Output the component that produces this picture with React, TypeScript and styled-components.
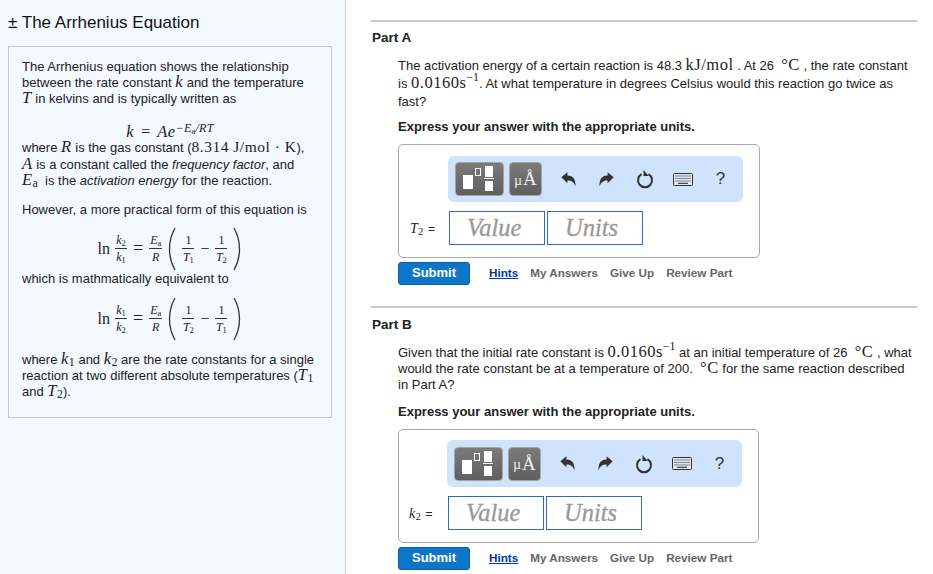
import React from "react";
import styled, { createGlobalStyle } from "styled-components";

const Global = createGlobalStyle`
  html, body { margin: 0; padding: 0; background: #fff; height: 100%; overflow: hidden; }
  body { font-family: "Liberation Sans", Arial, sans-serif; font-size: 13px; color: #222; }
`;

const Page = styled.div`
  display: flex;
  width: 933px;
  height: 574px;
  overflow: hidden;
`;

const Sidebar = styled.aside`
  flex: none;
  width: 346px;
  height: 574px;
  box-sizing: border-box;
  background: #f4f9ff;
  border-right: 1px solid #c9d6e2;
  padding-left: 8px;
`;

const SideTitle = styled.h1`
  margin: 0;
  padding-top: 13px;
  height: 46px;
  box-sizing: border-box;
  font-size: 17px;
  line-height: 20px;
  font-weight: 400;
  color: #111;
`;

const InfoBox = styled.div`
  width: 324px;
  box-sizing: border-box;
  border: 1px solid #b8cde0;
  padding: 12px 13px 17px;
`;

const M = styled.span<{ $size?: number }>`
  font-family: "Liberation Serif", "Times New Roman", serif;
  font-size: ${(p) => p.$size ?? 16.5}px;
  letter-spacing: 0.5px;
  line-height: 0;
`;

const Mi = styled(M)`
  font-style: italic;
`;

const Para = styled.p<{ $top?: number; $lh?: number }>`
  margin: ${(p) => p.$top ?? 0}px 0 0;
  line-height: ${(p) => p.$lh ?? 16}px;
  white-space: nowrap;
`;

const Formula = styled.div<{ $top: number; $h: number }>`
  display: flex;
  align-items: center;
  justify-content: center;
  height: ${(p) => p.$h}px;
  margin-top: ${(p) => p.$top}px;
  font-family: "Liberation Serif", "Times New Roman", serif;
  font-size: 16px;
  white-space: nowrap;
`;

const Power = styled.span`
  font-family: "Liberation Serif", "Times New Roman", serif;
  font-style: italic;
  font-size: 12px;
  letter-spacing: 0.3px;
  line-height: 12px;
  margin-bottom: 8px;
`;

const Sub = styled.sub`
  font-size: 0.72em;
  font-style: normal;
  letter-spacing: 0;
  line-height: 0;
  vertical-align: -0.2em;
`;

const Sup = styled.sup`
  font-size: 0.72em;
  letter-spacing: 0;
  line-height: 0;
  vertical-align: 0.55em;
`;

const Frac = styled.span`
  display: inline-flex;
  flex-direction: column;
  align-items: stretch;
  text-align: center;
  font-size: 12px;
  line-height: 14px;
  margin: 0 5px;
  min-width: 12px;
`;

const Num = styled.span<{ $upright?: boolean }>`
  display: block;
  border-bottom: 1px solid #333;
  padding: 0 1px 1px;
  font-style: ${(p) => (p.$upright ? "normal" : "italic")};
`;

const Den = styled.span`
  display: block;
  padding-top: 1px;
  font-style: italic;
`;

const Op = styled.span<{ $gap?: number; $size?: number }>`
  margin: 0 ${(p) => p.$gap ?? 1}px;
  font-size: ${(p) => p.$size ?? 16}px;
`;

const ParenIcon = styled.svg`
  flex: none;
  margin: 0 1px;
`;

const Main = styled.main`
  flex: 1;
  padding: 20px 16px 0 25px;
  min-width: 0;
`;

const Part = styled.section<{ $first?: boolean }>`
  border-top: 2px solid #cccccc;
  margin-top: ${(p) => (p.$first ? 0 : 21)}px;
`;

const PartTitle = styled.h2<{ $top: number }>`
  margin: ${(p) => p.$top}px 0 0 1px;
  font-size: 13.5px;
  line-height: 16px;
  font-weight: 700;
  color: #222;
`;

const PartBody = styled.div`
  padding-left: 27px;
`;

const Question = styled.p<{ $top: number; $lh: number }>`
  margin: ${(p) => p.$top}px 0 0;
  line-height: ${(p) => p.$lh}px;
  white-space: nowrap;
`;

const Express = styled.p<{ $top: number }>`
  margin: ${(p) => p.$top}px 0 0;
  font-weight: 700;
  line-height: 16px;
`;

const AnswerBox = styled.div<{ $w: number; $top: number }>`
  width: ${(p) => p.$w}px;
  height: 114px;
  margin-top: ${(p) => p.$top}px;
  box-sizing: border-box;
  border: 1px solid #a9a9a9;
  border-radius: 5px;
  padding: ${(p) => (p.$w === 362 ? 11 : 10)}px 0 0 ${(p) => (p.$w === 362 ? 49 : 48)}px;
`;

const Toolbar = styled.div<{ $h: number }>`
  display: flex;
  align-items: center;
  width: 295px;
  height: ${(p) => p.$h}px;
  box-sizing: border-box;
  background: #cfe3fc;
  border-radius: 6px;
  padding-left: 7px;
`;

const ToolButton = styled.div<{ $w: number }>`
  width: ${(p) => p.$w}px;
  height: 34px;
  box-sizing: border-box;
  display: flex;
  align-items: center;
  justify-content: center;
  margin-right: 5px;
  border: 1px solid #a3a3a3;
  border-radius: 4px;
  background: linear-gradient(#7b7b7b, #5f5f5f);
  color: #eee;
  font-family: "Liberation Serif", "Times New Roman", serif;
  font-size: 19px;
`;

const Micro = styled.span`
  font-size: 14px;
  margin-right: 1px;
  margin-top: 3px;
`;

const ToolIcon = styled.div<{ $w: number }>`
  width: ${(p) => p.$w}px;
  display: flex;
  align-items: center;
  justify-content: center;
  color: #333;
  font-size: 17px;
`;

const InputRow = styled.div`
  display: flex;
  align-items: center;
  margin: 9px 0 0 -38px;
`;

const VarLabel = styled.div`
  width: 39px;
  flex: none;
  font-size: 13px;
  white-space: nowrap;
`;

const Field = styled.div`
  width: 96px;
  height: 34px;
  margin-right: 2px;
  box-sizing: border-box;
  border: 1px solid #3366cc;
  background: #fff;
  padding-left: 17px;
  font-family: "Liberation Serif", "Times New Roman", serif;
  font-style: italic;
  font-size: 24.5px;
  line-height: 32px;
  color: #999999;
  -webkit-text-stroke: 0.3px #999999;
`;

const ActionRow = styled.div<{ $top: number }>`
  display: flex;
  align-items: center;
  margin-top: ${(p) => p.$top}px;
`;

const SubmitButton = styled.div`
  width: 72px;
  height: 23px;
  box-sizing: border-box;
  text-align: center;
  background: #0d76c9;
  border: 1px solid #0a5fa3;
  border-radius: 3px;
  color: #fff;
  font-weight: 700;
  font-size: 13px;
  line-height: 20px;
  margin-right: 19px;
`;

const ActionLink = styled.span<{ $primary?: boolean }>`
  font-size: 11.7px;
  font-weight: 700;
  margin: 0 12px 3px 0;
  color: ${(p) => (p.$primary ? "#00379e" : "#666666")};
  text-decoration: ${(p) => (p.$primary ? "underline" : "none")};
`;

const FlipIcon = styled.svg<{ $flip?: boolean }>`
  transform: ${(p) => (p.$flip ? "scaleX(-1)" : "none")};
`;

const Paren = ({ flip }: { flip?: boolean }) => (
  <ParenIcon width="8" height="44" viewBox="0 0 8 44" aria-hidden="true">
    <path
      d={flip ? "M1 1C5 8 6.5 15 6.5 22S5 36 1 43" : "M7 1C3 8 1.5 15 1.5 22S3 36 7 43"}
      fill="none"
      stroke="#333"
      strokeWidth="1.3"
    />
  </ParenIcon>
);

const TemplateIcon = () => (
  <svg width="44" height="28" viewBox="0 0 44 28" aria-hidden="true">
    <rect x="5" y="10" width="10" height="14" fill="#fff" />
    <rect x="17.5" y="3.5" width="5" height="7" fill="none" stroke="#fff" />
    <rect x="27" y="1" width="8" height="11" fill="#fff" />
    <rect x="26" y="13" width="10" height="1" fill="#fff" />
    <rect x="27" y="16" width="8" height="10" fill="#fff" />
  </svg>
);

const UndoIcon = ({ flip }: { flip?: boolean }) => (
  <FlipIcon $flip={flip} width="15" height="15" viewBox="0 0 14 14" aria-hidden="true">
    <path d="M0.3 5 6 0.3V3.2C10.8 3.2 13.9 6 13.5 13.6 12.2 9.6 10 7.9 6 7.9V10.4Z" fill="#333" />
  </FlipIcon>
);

const ResetIcon = () => (
  <svg width="18" height="20" viewBox="0 0 18 20" aria-hidden="true">
    <path d="M5.5 5.2A7 7 0 1 0 12.5 5.2" fill="none" stroke="#333" strokeWidth="2" />
    <path d="M12.8 7 7.5 1V7Z" fill="#333" />
  </svg>
);

const KeyboardIcon = () => (
  <svg width="20" height="13" viewBox="0 0 20 13" aria-hidden="true">
    <rect x="0.5" y="0.5" width="19" height="12" rx="1" fill="#dfe7f0" stroke="#333" />
    <path d="M2.5 3h15M2.5 5.5h15M2.5 8h15" stroke="#222" strokeWidth="1.1" strokeDasharray="1 1" />
    <path d="M5 10.3h10" stroke="#222" strokeWidth="1" />
  </svg>
);

const Tools = ({ h }: { h: number }) => (
  <Toolbar $h={h}>
    <ToolButton $w={50}>
      <TemplateIcon />
    </ToolButton>
    <ToolButton $w={33}><Micro>µ</Micro>Å</ToolButton>
    <ToolIcon $w={44}><UndoIcon /></ToolIcon>
    <ToolIcon $w={33}><UndoIcon flip /></ToolIcon>
    <ToolIcon $w={47}><ResetIcon /></ToolIcon>
    <ToolIcon $w={30}><KeyboardIcon /></ToolIcon>
    <ToolIcon $w={46}>?</ToolIcon>
  </Toolbar>
);

const Actions = ({ top }: { top: number }) => (
  <ActionRow $top={top}>
    <SubmitButton>Submit</SubmitButton>
    <ActionLink $primary>Hints</ActionLink>
    <ActionLink>My Answers</ActionLink>
    <ActionLink>Give Up</ActionLink>
    <ActionLink>Review Part</ActionLink>
  </ActionRow>
);

const RateFormula = ({ a, b, c, d, top, h }: { a: string; b: string; c: string; d: string; top: number; h: number }) => (
  <Formula $top={top} $h={h}>
    ln
    <Frac><Num>k<Sub>{a}</Sub></Num><Den>k<Sub>{b}</Sub></Den></Frac>
    <Op $size={18}>=</Op>
    <Frac><Num>E<Sub>a</Sub></Num><Den>R</Den></Frac>
    <Paren />
    <Frac><Num $upright>1</Num><Den>T<Sub>{c}</Sub></Den></Frac>
    <Op>−</Op>
    <Frac><Num $upright>1</Num><Den>T<Sub>{d}</Sub></Den></Frac>
    <Paren flip />
  </Formula>
);

export default function App() {
  return (
    <Page>
      <Global />
      <Sidebar>
        <SideTitle>± The Arrhenius Equation</SideTitle>
        <InfoBox>
          <Para>
            The Arrhenius equation shows the relationship<br />
            between the rate constant <Mi>k</Mi> and the temperature<br />
            <Mi>T</Mi> in kelvins and is typically written as
          </Para>
          <Formula $top={16} $h={17}>
            <Mi>k</Mi><Op $gap={7}>=</Op><Mi>Ae</Mi>
            <Power>−E<Sub>a</Sub>/RT</Power>
          </Formula>
          <Para $lh={16.5}>
            where <Mi>R</Mi> is the gas constant (<M $size={15.5}>8.314 J/mol · K</M>),<br />
            <Mi>A</Mi> is a constant called the <em>frequency factor</em>, and<br />
            <Mi>E<Sub>a</Sub></Mi> &nbsp;is the <em>activation energy</em> for the reaction.
          </Para>
          <Para $top={12}>However, a more practical form of this equation is</Para>
          <RateFormula a="2" b="1" c="1" d="2" top={8} h={46} />
          <Para $top={-1}>which is mathmatically equivalent to</Para>
          <RateFormula a="1" b="2" c="2" d="1" top={9} h={46} />
          <Para $top={10}>
            where <Mi>k<Sub>1</Sub></Mi> and <Mi>k<Sub>2</Sub></Mi> are the rate constants for a single<br />
            reaction at two different absolute temperatures (<Mi>T<Sub>1</Sub></Mi><br />
            and <Mi>T<Sub>2</Sub></Mi>).
          </Para>
        </InfoBox>
      </Sidebar>
      <Main>
        <Part $first>
          <PartTitle $top={8}>Part A</PartTitle>
          <PartBody>
            <Question $top={11} $lh={18}>
              The activation energy of a certain reaction is 48.3 <M>kJ/mol</M> . At 26 &nbsp;<M>°C</M> , the rate constant<br />
              is <M>0.0160s<Sup>−1</Sup></M>. At what temperature in degrees Celsius would this reaction go twice as<br />
              fast?
            </Question>
            <Express $top={8}>Express your answer with the appropriate units.</Express>
            <AnswerBox $w={362} $top={9}>
              <Tools h={46} />
              <InputRow>
                <VarLabel><Mi $size={14}>T<Sub>2</Sub></Mi> <Op $gap={1} $size={12}>=</Op></VarLabel>
                <Field>Value</Field>
                <Field>Units</Field>
              </InputRow>
            </AnswerBox>
            <Actions top={4} />
          </PartBody>
        </Part>
        <Part>
          <PartTitle $top={9}>Part B</PartTitle>
          <PartBody>
            <Question $top={12} $lh={16}>
              Given that the initial rate constant is <M>0.0160s<Sup>−1</Sup></M> at an initial temperature of 26 &nbsp;<M>°C</M> , what<br />
              would the rate constant be at a temperature of 200. &nbsp;<M>°C</M> for the same reaction described<br />
              in Part A?
            </Question>
            <Express $top={11}>Express your answer with the appropriate units.</Express>
            <AnswerBox $w={361} $top={9}>
              <Tools h={47} />
              <InputRow>
                <VarLabel><Mi $size={14}>k<Sub>2</Sub></Mi> <Op $gap={1} $size={12}>=</Op></VarLabel>
                <Field>Value</Field>
                <Field>Units</Field>
              </InputRow>
            </AnswerBox>
            <Actions top={4} />
          </PartBody>
        </Part>
      </Main>
    </Page>
  );
}
